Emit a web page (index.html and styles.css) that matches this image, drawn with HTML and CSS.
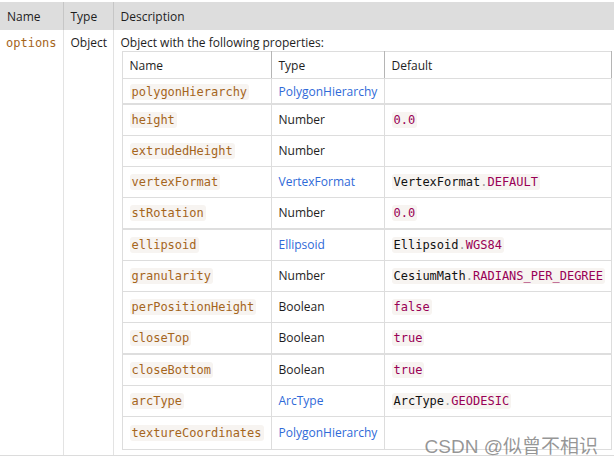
FILE: index.html
```html
<!DOCTYPE html>
<html lang="en">
<head>
<meta charset="utf-8">
<title>Parameters</title>
<link rel="stylesheet" href="styles.css">
</head>
<body>
<div class="page">
  <table class="params">
    <colgroup><col class="w-name"><col class="w-type"><col class="w-desc"></colgroup>
    <thead>
      <tr><th>Name</th><th>Type</th><th>Description</th></tr>
    </thead>
    <tbody>
      <tr>
        <td><code class="pname">options</code></td>
        <td>Object</td>
        <td class="desc">
          <div class="lead">Object with the following properties:</div>
          <table class="props">
            <colgroup><col class="p-name"><col class="p-type"><col class="p-def"></colgroup>
            <thead>
              <tr><th>Name</th><th>Type</th><th>Default</th></tr>
            </thead>
            <tbody>
              <tr class="first"><td><code class="pname">polygonHierarchy</code></td><td><span class="link">PolygonHierarchy</span></td><td></td></tr>
            </tbody>
            <tbody class="grp">
              <tr><td><code class="pname">height</code></td><td>Number</td><td><code><span class="v">0.0</span></code></td></tr>
              <tr><td><code class="pname">extrudedHeight</code></td><td>Number</td><td></td></tr>
              <tr><td><code class="pname">vertexFormat</code></td><td><span class="link">VertexFormat</span></td><td><code>VertexFormat<span class="p">.</span><span class="v">DEFAULT</span></code></td></tr>
              <tr><td><code class="pname">stRotation</code></td><td>Number</td><td><code><span class="v">0.0</span></code></td></tr>
            </tbody>
            <tbody class="grp">
              <tr><td><code class="pname">ellipsoid</code></td><td><span class="link">Ellipsoid</span></td><td><code>Ellipsoid<span class="p">.</span><span class="v">WGS84</span></code></td></tr>
              <tr><td><code class="pname">granularity</code></td><td>Number</td><td><code>CesiumMath<span class="p">.</span><span class="v">RADIANS_PER_DEGREE</span></code></td></tr>
              <tr><td><code class="pname">perPositionHeight</code></td><td>Boolean</td><td><code><span class="v">false</span></code></td></tr>
              <tr><td><code class="pname">closeTop</code></td><td>Boolean</td><td><code><span class="v">true</span></code></td></tr>
            </tbody>
            <tbody class="grp">
              <tr><td><code class="pname">closeBottom</code></td><td>Boolean</td><td><code><span class="v">true</span></code></td></tr>
              <tr><td><code class="pname">arcType</code></td><td><span class="link">ArcType</span></td><td><code>ArcType<span class="p">.</span><span class="v">GEODESIC</span></code></td></tr>
              <tr class="last"><td><code class="pname">textureCoordinates</code></td><td><span class="link">PolygonHierarchy</span></td><td></td></tr>
            </tbody>
          </table>
        </td>
      </tr>
    </tbody>
  </table>
  <div class="watermark">CSDN @似曾不相识</div>
</div>
</body>
</html>
```
FILE: styles.css
```css
html, body {
  margin: 0;
  padding: 0;
  background: #fff;
}
body {
  font-family: "Open Sans", "Noto Sans", sans-serif;
  font-size: 12px;
  color: #1e1e1e;
}
.page {
  position: relative;
  width: 614px;
  height: 466px;
  overflow: hidden;
  padding-top: 2px;
  box-sizing: border-box;
}
code {
  font-family: "DejaVu Sans Mono", "Liberation Mono", monospace;
  font-size: 12px;
}
.params {
  border-collapse: collapse;
  table-layout: fixed;
  width: 614px;
}
.w-name { width: 63px; }
.w-type { width: 50px; }
.params > thead > tr > th {
  background: #dddddd;
  height: 28px;
  padding: 0 7px;
  text-align: left;
  font-weight: normal;
  color: #1e1e1e;
  border-left: 1px solid #c6c6c6;
  box-sizing: border-box;
}
.params > thead > tr > th:first-child { border-left: none; }
.params > tbody > tr > td {
  vertical-align: top;
  padding: 5px 7px 5px 7px;
  line-height: 16px;
  border-left: 1px solid #e3e3e3;
  border-bottom: 1px solid #dcdcdc;
}
.params > tbody > tr > td:first-child { border-left: none; padding-left: 6px; }
.pname { color: #a5651c; }
.lead { line-height: 16px; }
.props {
  border-collapse: collapse;
  table-layout: fixed;
  width: 490px;
  margin-left: 1px;
}
.p-name { width: 149px; }
.p-type { width: 113px; }
.props th {
  font-weight: normal;
  text-align: left;
  padding: 5px 7px 3px;
  line-height: 18px;
  border: 1px solid #dddddd;
  border-right-color: #b5b5b5;
}
.props td {
  padding: 4px 7px;
  line-height: 22px;
  border: 1px solid #dddddd;
  vertical-align: top;
  white-space: nowrap;
}
.props tr.first td {
  padding-top: 3px;
  padding-bottom: 1px;
  line-height: 20px;
}
.props tr.last td {
  padding-top: 5px;
  padding-bottom: 5px;
}
.props tbody.grp tr:first-child td { border-top: 2px solid #dedede; }
.props code {
  background: #f7f4f1;
  padding: 1px 2px;
  border-radius: 3px;
  color: #111;
}
.props code.pname { color: #a5651c; }
.props .v { color: #990055; }
.props .p { color: #999; }
.link { color: #2f6ad8; }
.watermark {
  position: absolute;
  right: 16px;
  top: 436px;
  font-family: "Liberation Sans", "Noto Sans CJK SC", sans-serif;
  font-size: 19px;
  line-height: 22px;
  color: rgba(110, 110, 110, 0.72);
}
```
